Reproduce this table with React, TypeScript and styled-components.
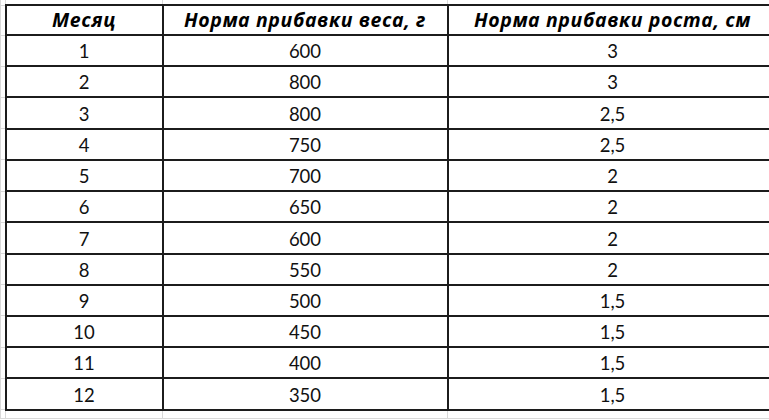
import React from 'react';
import styled, { createGlobalStyle } from 'styled-components';

const GlobalStyle = createGlobalStyle`
  html, body {
    margin: 0;
    padding: 0;
    background: #fff;
    overflow: hidden;
  }
  body {
    font-family: Lato, "Open Sans", sans-serif;
  }
`;

const rows: [number, string, string][] = [
  [1, '600', '3'],
  [2, '800', '3'],
  [3, '800', '2,5'],
  [4, '750', '2,5'],
  [5, '700', '2'],
  [6, '650', '2'],
  [7, '600', '2'],
  [8, '550', '2'],
  [9, '500', '1,5'],
  [10, '450', '1,5'],
  [11, '400', '1,5'],
  [12, '350', '1,5'],
];

const Sheet = styled.table`
  border-collapse: collapse;
  table-layout: fixed;
  width: 777px;
  margin-top: -1px;
  color: #111;
`;

const GridCell = styled.td<{ $h?: number }>`
  border: 1px solid #d9d9d9;
  padding: 0;
  height: ${({ $h }) => ($h ? `${$h}px` : 'auto')};
`;

const Cell = styled.td`
  border: 2px solid #1c1c1c;
  padding: 0 0 3px;
  height: 26.23px;
  text-align: center;
  vertical-align: bottom;
  font-size: 18.5px;
  line-height: 22px;
  white-space: nowrap;
`;

const HeadCell = styled(Cell)`
  height: 25px;
  padding-bottom: 3px;
  font-family: "Open Sans", Lato, sans-serif;
  font-size: 19.5px;
  letter-spacing: 0.6px;
  font-weight: 700;
  font-style: italic;
  color: #000;
`;

const Row = styled.tr``;

export default function App() {
  return (
    <>
      <GlobalStyle />
      <Sheet>
        <colgroup>
          <col style={{ width: 5 }} />
          <col style={{ width: 157 }} />
          <col style={{ width: 285 }} />
          <col style={{ width: 330 }} />
        </colgroup>
        <tbody>
          <Row>
            <GridCell $h={4} />
            <GridCell $h={4} />
            <GridCell $h={4} />
            <GridCell $h={4} />
          </Row>
          <Row>
            <GridCell />
            <HeadCell as="th">Месяц</HeadCell>
            <HeadCell as="th">Норма прибавки веса, г</HeadCell>
            <HeadCell as="th">Норма прибавки роста, см</HeadCell>
          </Row>
          {rows.map(([m, w, h]) => (
            <Row key={m}>
              <GridCell />
              <Cell>{m}</Cell>
              <Cell>{w}</Cell>
              <Cell>{h}</Cell>
            </Row>
          ))}
          <Row>
            <GridCell $h={7} />
            <GridCell $h={7} />
            <GridCell $h={7} />
            <GridCell $h={7} />
          </Row>
        </tbody>
      </Sheet>
    </>
  );
}
